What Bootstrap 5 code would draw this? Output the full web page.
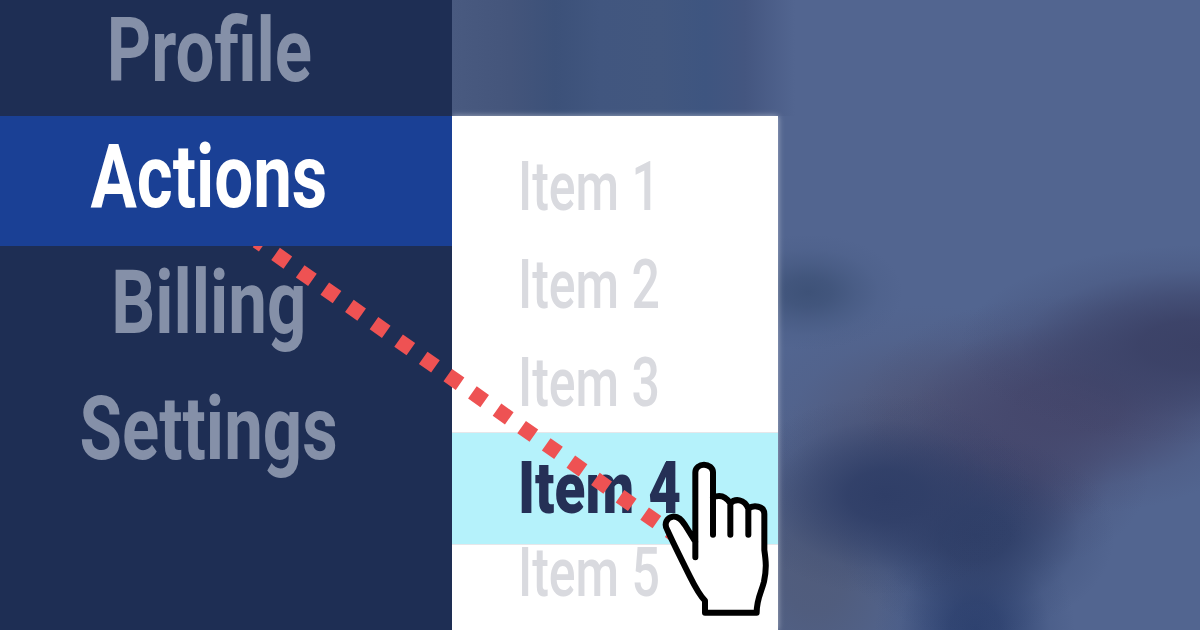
<!DOCTYPE html>
<html lang="en">
<head>
<meta charset="utf-8">
<title>Menu</title>
<link href="https://cdn.jsdelivr.net/npm/bootstrap@5.3.0/dist/css/bootstrap.min.css" rel="stylesheet">
<style>
html,body{height:630px;overflow:hidden}
body{font-family:"Roboto",sans-serif;background-color:#526590;
background-image:
linear-gradient(90deg,#495a80 452px,#44557b 510px,#3c5179 555px,#41567f 600px,#42577f 660px,#3e5580 705px,#445680 745px,#526590 795px),
radial-gradient(ellipse 95px 58px at 808px 292px,rgba(62,82,120,1) 0%,rgba(62,82,120,.8) 25%,rgba(62,82,120,.42) 50%,rgba(62,82,120,.12) 75%,rgba(62,82,120,0) 100%),
radial-gradient(ellipse 150px 100px at 885px 495px,rgba(47,62,103,1) 0%,rgba(47,62,103,.9) 25%,rgba(47,62,103,.55) 50%,rgba(47,62,103,.15) 75%,rgba(47,62,103,0) 100%),
radial-gradient(ellipse 140px 100px at 975px 535px,rgba(47,63,104,1) 0%,rgba(47,63,104,.9) 25%,rgba(47,63,104,.55) 50%,rgba(47,63,104,.15) 75%,rgba(47,63,104,0) 100%),
radial-gradient(ellipse 100px 115px at 975px 630px,rgba(46,66,112,1) 0%,rgba(46,66,112,.9) 25%,rgba(46,66,112,.55) 50%,rgba(46,66,112,.15) 75%,rgba(46,66,112,0) 100%),
radial-gradient(ellipse 240px 100px at 1200px 345px,rgba(59,65,102,1) 0%,rgba(59,65,102,.92) 25%,rgba(59,65,102,.6) 50%,rgba(59,65,102,.18) 75%,rgba(59,65,102,0) 100%),
radial-gradient(ellipse 210px 110px at 1070px 405px,rgba(69,71,108,1) 0%,rgba(69,71,108,.92) 25%,rgba(69,71,108,.6) 50%,rgba(69,71,108,.18) 75%,rgba(69,71,108,0) 100%),
radial-gradient(ellipse 150px 100px at 1000px 475px,rgba(67,71,109,1) 0%,rgba(67,71,109,.9) 25%,rgba(67,71,109,.55) 50%,rgba(67,71,109,.15) 75%,rgba(67,71,109,0) 100%),
radial-gradient(ellipse 190px 125px at 930px 430px,rgba(80,88,122,1) 0%,rgba(80,88,122,.9) 25%,rgba(80,88,122,.55) 50%,rgba(80,88,122,.15) 75%,rgba(80,88,122,0) 100%),
radial-gradient(ellipse 125px 170px at 815px 570px,rgba(80,92,124,1) 0%,rgba(80,92,124,.9) 25%,rgba(80,92,124,.55) 50%,rgba(80,92,124,.15) 75%,rgba(80,92,124,0) 100%);
background-size:1200px 116px,100% 100%,100% 100%,100% 100%,100% 100%,100% 100%,100% 100%,100% 100%,100% 100%,100% 100%;
background-repeat:no-repeat}
.stage{height:630px}
.side-nav{width:452px;background:#1e2e54;z-index:1}
.side-link{padding-right:34px;font-size:89px;font-weight:700;color:#8590a8;line-height:1}
.side-link span{display:inline-block;transform:scaleX(.775)}
.link-a{height:116px;padding-bottom:15px}
.link-b{height:130px;padding-bottom:10px;background:#1a4095;color:#fff}
.link-c{height:113px}
.link-d{height:138px}
.drop-menu{width:326px;margin-top:116px;background:#fff;box-shadow:0 0 6px rgba(255,255,255,.5)}
.drop-row{height:98px;padding-left:66px;font-size:68px;font-weight:500;color:#d9dadf;line-height:1}
.drop-row span{display:inline-block;transform:scaleX(.735);transform-origin:left center}
.drop-row.is-hover{height:111px;margin-top:1px;background:#b5f2fb;color:#253056;font-size:73px;font-weight:900;box-shadow:0 0 0 1px #e6e7ea}
.drop-row.is-hover span{transform:scaleX(.775)}
.drop-row.is-last{height:58px}
.drop-lead{height:22px}
.overlay-svg{position:absolute;left:0;top:0;z-index:2;pointer-events:none}
.hand-svg{position:absolute;left:640px;top:440px;z-index:3}
</style>
</head>
<body class="position-relative m-0">
<div class="stage d-flex">
  <nav class="side-nav position-relative d-flex flex-column">
    <div class="side-link link-a d-flex align-items-center justify-content-center"><span>Profile</span></div>
    <div class="side-link link-b d-flex align-items-center justify-content-center"><span>Actions</span></div>
    <div class="side-link link-c d-flex align-items-center justify-content-center"><span>Billing</span></div>
    <div class="side-link link-d d-flex align-items-center justify-content-center"><span>Settings</span></div>
  </nav>
  <div class="drop-menu d-flex flex-column overflow-hidden">
    <div class="drop-lead flex-shrink-0"></div>
    <div class="drop-row flex-shrink-0 d-flex align-items-center"><span>Item 1</span></div>
    <div class="drop-row flex-shrink-0 d-flex align-items-center"><span>Item 2</span></div>
    <div class="drop-row flex-shrink-0 d-flex align-items-center"><span>Item 3</span></div>
    <div class="drop-row is-hover flex-shrink-0 d-flex align-items-center"><span>Item 4</span></div>
    <div class="drop-row is-last flex-shrink-0 d-flex align-items-center"><span>Item 5</span></div>
  </div>
</div>
<svg class="overlay-svg" width="1200" height="630" viewBox="0 0 1200 630" aria-hidden="true">
  <defs><clipPath id="below"><rect x="0" y="246" width="1200" height="384"/></clipPath></defs>
  <line x1="257.1" y1="241" x2="700" y2="552.5" stroke="#ee5253" stroke-width="15" stroke-dasharray="15 15.08" stroke-dashoffset="7.5" clip-path="url(#below)"/>
</svg>
<svg class="hand-svg" width="150" height="190" viewBox="0 0 450 570" aria-hidden="true">
  <path d="M168 300V97C168 83 179 74 192 74C206 74 217 84 217 97V172C235 165 258 170 272 190C285 177 313 176 325 206C340 194 373 197 373 222V330C378 365 380 385 372 425C365 455 350 475 350 518H195V482C175 462 160 430 145 400C125 360 100 310 82 270C70 250 82 232 98 230C115 228 125 240 135 255Z" fill="#fff"/>
  <path d="M166 352V97C166 83 179 74 192 74C206 74 219 84 219 97V284M219 172C240 163 258 170 271 190V284M271 190C285 175 313 176 325 206V284M325 206C340 194 373 197 373 222V330C378 365 380 385 372 425C365 455 350 475 350 518H195V482C175 462 160 430 145 400C125 360 100 310 82 270C70 250 82 232 98 230C115 228 125 240 135 255L166 305" fill="none" stroke="#000" stroke-width="18" stroke-linecap="round" stroke-linejoin="round"/>
</svg>
<script src="https://cdn.jsdelivr.net/npm/bootstrap@5.3.0/dist/js/bootstrap.bundle.min.js"></script>
</body>
</html>
